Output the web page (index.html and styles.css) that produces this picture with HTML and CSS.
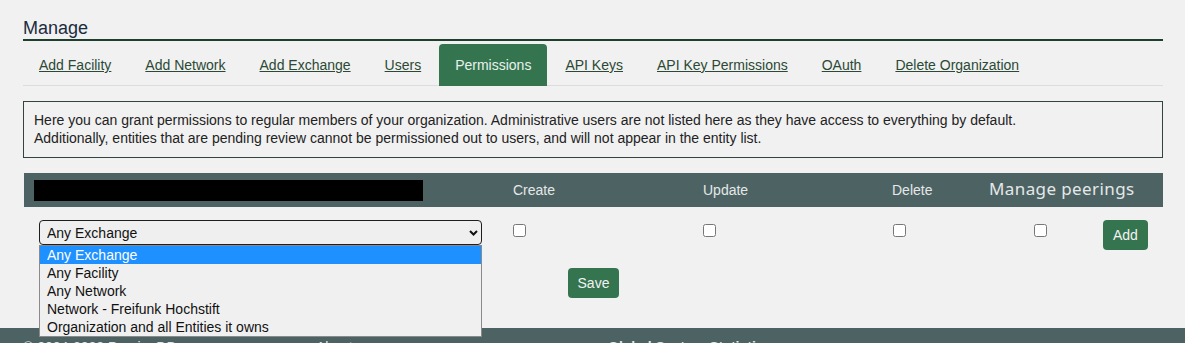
FILE: index.html
```html
<!DOCTYPE html>
<html lang="en">
<head>
	<meta charset="UTF-8">
	<title>Manage - Permissions</title>
	<link rel="stylesheet" href="styles.css">
</head>
<body>
	<div class="page">
		<h3 class="title">Manage</h3>
		<ul class="tabs">
			<li><a href="#">Add Facility</a></li>
			<li><a href="#">Add Network</a></li>
			<li><a href="#">Add Exchange</a></li>
			<li><a href="#">Users</a></li>
			<li class="active"><a href="#">Permissions</a></li>
			<li><a href="#">API Keys</a></li>
			<li><a href="#">API Key Permissions</a></li>
			<li><a href="#">OAuth</a></li>
			<li><a href="#">Delete Organization</a></li>
		</ul>

		<div class="note">
			Here you can grant permissions to regular members of your organization. Administrative users are not listed here as they have access to everything by default.<br>
			Additionally, entities that are pending review cannot be permissioned out to users, and will not appear in the entity list.
		</div>

		<div class="perms">
			<div class="perms-head">
				<div class="cell"><span class="redacted"></span></div>
				<div class="cell">Create</div>
				<div class="cell">Update</div>
				<div class="cell">Delete</div>
				<div class="cell peerings">Manage peerings</div>
			</div>
			<div class="perms-row">
				<div class="cell entity">
					<div class="select-wrap">
						<select class="select">
							<option>Any Exchange</option>
							<option>Any Facility</option>
							<option>Any Network</option>
							<option>Network - Freifunk Hochstift</option>
							<option>Organization and all Entities it owns</option>
						</select>
						<svg class="chevron" width="9" height="6" viewBox="0 0 9 6"><path d="M1 1l3.5 3.5L8 1" fill="none" stroke="#111" stroke-width="2"/></svg>
					</div>
					<!-- opened list of the select -->
					<ul class="dropdown">
						<li class="hl">Any Exchange</li>
						<li>Any Facility</li>
						<li>Any Network</li>
						<li>Network - Freifunk Hochstift</li>
						<li>Organization and all Entities it owns</li>
					</ul>
				</div>
				<div class="cell"><input type="checkbox"></div>
				<div class="cell"><input type="checkbox"></div>
				<div class="cell delete"><input type="checkbox"></div>
				<div class="cell last">
					<input type="checkbox">
					<button class="btn">Add</button>
				</div>
			</div>
		</div>

		<div class="save"><button class="btn">Save</button></div>
	</div>

	<div class="footer">
		<span class="copy">&copy; 2004-2023 PeeringDB</span>
		<span class="about">About</span>
		<span class="stats">Global System Statistics</span>
	</div>
</body>
</html>
```

FILE: styles.css
```css
*{
	margin: 0;
	padding: 0;
	box-sizing: border-box;
}
ul,li{
	list-style: none;
}
body{
	background: #f1f1f1;
	font-family: "Liberation Sans", Arial, sans-serif;
	font-size: 14px;
	color: #222;
	overflow: hidden;
}
.page{
	width: 1140px;
	margin-left: 23px;
}
.title{
	font-size: 18px;
	font-weight: normal;
	line-height: 20px;
	color: #1a2c3e;
	padding-top: 18px;
	padding-bottom: 1px;
	border-bottom: 2px solid #1d3f2e;
	margin-bottom: 3px;
}
.tabs{
	display: flex;
	border-bottom: 1px solid #dcdcdc;
}
.tabs li{
	margin-right: 2px;
	margin-bottom: -1px;
}
.tabs a{
	display: block;
	padding: 10px 15px;
	border: 1px solid transparent;
	line-height: 20px;
	color: #2b4935;
	text-decoration: underline;
}
.tabs .active a{
	background: #347550;
	color: #e9f1ec;
	text-decoration: none;
	border-radius: 4px 4px 0 0;
}
.note{
	margin-top: 15px;
	border: 1px solid #33433f;
	padding: 9px 10px 10px;
	line-height: 18px;
}
.perms{
	margin-top: 15px;
	margin-left: 1px;
}
.perms-head,
.perms-row{
	display: grid;
	grid-template-columns: 479px 190px 189px 97px 1fr;
}
.perms-head{
	height: 34px;
	background: #4d6263;
	color: #e4e8e8;
	align-items: center;
}
.perms-head .cell{
	padding-left: 10px;
}
.redacted{
	display: block;
	width: 389px;
	height: 21px;
	background: #000;
}
.perms-head .peerings{
	font-family: "Noto Sans", sans-serif;
	font-size: 17px;
	letter-spacing: 0.4px;
	padding-bottom: 3px;
}
.perms-row{
	padding-top: 13px;
	align-items: start;
}
.perms-row .cell{
	padding-left: 10px;
	padding-top: 4px;
}
.perms-row .entity{
	position: relative;
	padding-left: 15px;
	padding-top: 0;
}
.perms-row .delete{
	padding-left: 11px;
}
.perms-row .last{
	display: flex;
	align-items: flex-start;
	padding-left: 55px;
	padding-top: 0;
}
.perms-row .last input{
	margin-top: 4px;
	margin-right: 56px;
}
input[type=checkbox]{
	display: block;
	width: 13px;
	height: 13px;
	margin: 0;
}
.select-wrap{
	position: relative;
	width: 443px;
}
.select{
	appearance: none;
	display: block;
	width: 443px;
	height: 25px;
	padding: 0 7px;
	border: 1px solid #1e1e1e;
	border-radius: 4px;
	background: #efefef;
	font-family: "Liberation Sans", Arial, sans-serif;
	font-size: 14px;
	color: #111;
}
.chevron{
	position: absolute;
	right: 4px;
	top: 10px;
}
.dropdown{
	position: absolute;
	top: 25px;
	left: 15px;
	width: 443px;
	border: 1px solid #8a8a8a;
	background: #f0f0f0;
	z-index: 5;
}
.dropdown li{
	height: 18px;
	line-height: 18px;
	padding-left: 7px;
	color: #111;
}
.dropdown .hl{
	background: #1e90ff;
	color: #fff;
}
.btn{
	border: none;
	border-radius: 4px;
	background: #347550;
	color: #f2f2f2;
	font-family: "Liberation Sans", Arial, sans-serif;
	font-size: 14px;
	line-height: 18px;
	padding: 6px 10px;
}
.save{
	display: flex;
	justify-content: center;
	margin-top: 18px;
	margin-bottom: 30px;
	padding-left: 1px;
}
.footer{
	height: 40px;
	background: #4d6263;
	color: #e4e8e8;
	padding-top: 9px;
	padding-left: 23px;
	display: flex;
	line-height: 20px;
}
.footer .copy{
	width: 293px;
}
.footer .about{
	width: 292px;
}
.footer .stats{
	font-weight: bold;
}
```
